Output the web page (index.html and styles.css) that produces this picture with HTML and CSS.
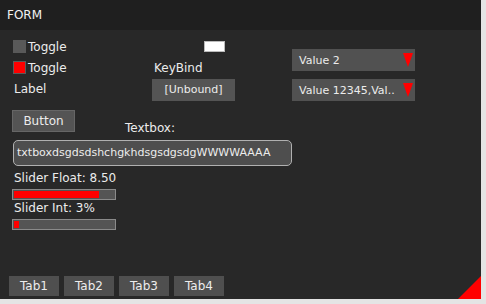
FILE: index.html
```html
<!DOCTYPE html>
<html lang="en">
<head>
    <meta charset="UTF-8">
    <title>FORM</title>
    <link rel="stylesheet" href="styles.css">
</head>
<body>
    <div class="window">
        <div class="titlebar">FORM</div>
        <div class="content">
            <div class="top">
                <div class="col col-toggles">
                    <div class="toggle"><span class="box"></span>Toggle</div>
                    <div class="toggle"><span class="box on"></span>Toggle</div>
                    <div class="label">Label</div>
                </div>
                <div class="col col-keybind">
                    <div class="color-swatch"></div>
                    <div class="keybind-label">KeyBind</div>
                    <div class="keybind">[Unbound]</div>
                </div>
                <div class="col col-combos">
                    <div class="combo">
                        <span>Value 2</span>
                        <svg class="arrow" width="10" height="14" viewBox="0 0 10 14"><polygon points="0,0 10,0 5,14" fill="#ff0000"/></svg>
                    </div>
                    <div class="combo">
                        <span>Value 12345,Val..</span>
                        <svg class="arrow" width="10" height="14" viewBox="0 0 10 14"><polygon points="0,0 10,0 5,14" fill="#ff0000"/></svg>
                    </div>
                </div>
            </div>

            <div class="button-row">
                <div class="btn">Button</div>
                <div class="textbox-label">Textbox:</div>
            </div>
            <div class="textbox">txtboxdsgdsdshchgkhdsgsdgsdgWWWWAAAA</div>

            <div class="slider-label">Slider Float: 8.50</div>
            <div class="slider"><div class="fill" style="width: 85%"></div></div>
            <div class="slider-label tight">Slider Int: 3%</div>
            <div class="slider"><div class="fill" style="width: 5%"></div></div>

            <div class="tabs">
                <div class="tab">Tab1</div>
                <div class="tab">Tab2</div>
                <div class="tab">Tab3</div>
                <div class="tab">Tab4</div>
            </div>
        </div>
        <div class="corner"></div>
    </div>
</body>
</html>
```

FILE: styles.css
```css
* {
    margin: 0;
    padding: 0;
    box-sizing: border-box;
}

body {
    background-color: #e4e4e4;
    font-family: 'DejaVu Sans', Verdana, sans-serif;
    font-size: 12px;
    color: #ececec;
}

.window {
    position: relative;
    width: 481px;
    height: 299px;
    background-color: #282828;
    display: flex;
    flex-direction: column;
}

.titlebar {
    height: 30px;
    background-color: #1f1f1f;
    padding: 8px 0 0 7px;
    font-size: 12px;
    color: #f2f2f2;
}

.content {
    flex: 1;
    display: flex;
    flex-direction: column;
    padding: 10px 0 3px 12px;
}

.top {
    display: flex;
}

.col {
    display: flex;
    flex-direction: column;
}

.col-toggles {
    width: 140px;
    padding-left: 1px;
}

.toggle {
    display: flex;
    align-items: center;
    height: 13px;
    margin-bottom: 8px;
    line-height: 14px;
}

.box {
    width: 13px;
    height: 13px;
    background-color: #595959;
    margin-right: 2px;
}

.box.on {
    background-color: #ff0000;
    border: 1px solid #5a5a5a;
}

.label {
    margin-top: -1px;
    padding-left: 1px;
    line-height: 16px;
}

.col-keybind {
    width: 140px;
}

.color-swatch {
    width: 21px;
    height: 11px;
    margin: 1px 0 0 52px;
    background-color: #fff;
    border: 1px solid #bbb;
}

.keybind-label {
    margin: 8px 0 0 2px;
    line-height: 16px;
}

.keybind {
    width: 83px;
    height: 22px;
    margin-top: 3px;
    background-color: #545454;
    font-size: 11px;
    line-height: 22px;
    text-align: center;
}

.col-combos {
    padding-top: 9px;
    gap: 8px;
}

.combo {
    width: 123px;
    height: 22px;
    padding: 0 2px 0 7px;
    background-color: #515151;
    display: flex;
    align-items: center;
    justify-content: space-between;
    font-size: 11px;
    white-space: nowrap;
}

.button-row {
    display: flex;
    align-items: flex-end;
    margin-top: 9px;
}

.btn {
    width: 63px;
    height: 22px;
    background-color: #545454;
    border: 1px solid #666;
    line-height: 20px;
    text-align: center;
}

.textbox-label {
    margin-left: 50px;
    line-height: 16px;
    margin-bottom: -4px;
}

.textbox {
    width: 279px;
    height: 26px;
    margin: 8px 0 0 1px;
    padding-left: 3px;
    background-color: #4e4e4e;
    border: 1px solid #b0b0b0;
    border-radius: 5px;
    line-height: 24px;
    font-size: 11px;
    white-space: nowrap;
}

.slider-label {
    margin: 4px 0 0 2px;
    line-height: 16px;
}

.slider-label.tight {
    margin-top: 0;
}

.slider {
    width: 104px;
    height: 11px;
    margin-top: 3px;
    background-color: #545454;
    border: 1px solid #8a8a8a;
    padding: 1px;
}

.fill {
    height: 100%;
    background-color: #ff0000;
}

.tabs {
    display: flex;
    gap: 5px;
    margin-top: auto;
    margin-left: -3px;
}

.tab {
    width: 50px;
    height: 20px;
    background-color: #4f4f4f;
    line-height: 20px;
    text-align: center;
}

.corner {
    position: absolute;
    right: 0;
    bottom: 0;
    width: 0;
    height: 0;
    border-left: 23px solid transparent;
    border-bottom: 23px solid #ff0000;
}
```
